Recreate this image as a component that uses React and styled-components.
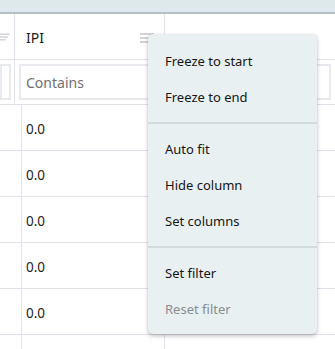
import React from 'react';
import styled, { createGlobalStyle } from 'styled-components';

const GlobalStyle = createGlobalStyle`
  html, body {
    margin: 0;
    padding: 0;
    background: #ffffff;
    overflow: hidden;
  }
  body {
    font-family: "Noto Sans", "Open Sans", sans-serif;
    color: #1c1c1c;
  }
`;

const Page = styled.div`
  position: relative;
  width: 335px;
  height: 349px;
  overflow: hidden;
`;

const TopBar = styled.div`
  height: 12px;
  background: #dde9ea;
  border-bottom: 2px solid #b3bdc2;
`;

const Row = styled.div`
  display: grid;
  grid-template-columns: 15px 150px 1fr;
  height: ${p => p.h}px;
  border-bottom: 1px solid #e1e1ea;
  box-sizing: border-box;
`;

const Cell = styled.div`
  display: flex;
  align-items: center;
  border-right: 1px solid #e1e1ea;
  padding: 2px 10px 0 11px;
  font-size: 13.5px;
  min-width: 0;
  position: relative;
  &:last-child {
    border-right: none;
  }
`;

const EdgeCell = styled(Cell)`
  padding: 0;
  justify-content: flex-end;
  padding-right: 4px;
`;

const HeaderText = styled.span`
  flex: 1;
  font-size: 14px;
  color: #1a1a1a;
`;

const FilterCell = styled.div`
  display: flex;
  align-items: center;
  border-right: 1px solid #e1e1ea;
  padding: 0 4px;
  &:last-child {
    border-right: none;
  }
`;

const FilterBox = styled.div`
  flex: 1;
  height: 36px;
  box-sizing: border-box;
  border: 2px solid #e9e9f0;
  display: flex;
  align-items: center;
  padding-left: 5px;
  font-size: 14px;
  color: #6f6f6f;
  margin-right: ${p => p.mr || 0}px;
`;

const Menu = styled.div`
  position: absolute;
  left: 148px;
  top: 34px;
  width: 169px;
  height: 300px;
  box-sizing: border-box;
  padding: 9px 0 7px;
  background: #e9f0f2;
  border-radius: 5px;
  box-shadow: 0 2px 4px rgba(0, 0, 0, 0.25), 0 0 1px rgba(0, 0, 0, 0.12);
  display: flex;
  flex-direction: column;
`;

const MenuItem = styled.div`
  height: 36px;
  display: flex;
  align-items: center;
  padding-left: 17px;
  font-size: 13px;
  color: ${p => (p.disabled ? '#8a8d8f' : '#161616')};
`;

const Separator = styled.div`
  height: 2px;
  margin: 7px 0;
  background: #d3dbde;
`;

function ColumnIcon() {
  return (
    <svg width="14" height="10" viewBox="0 0 14 10">
      <g stroke="#b4b4b8" strokeWidth="1.2">
        <line x1="0" y1="1" x2="14" y2="1" />
        <line x1="0" y1="5" x2="11" y2="5" />
        <line x1="0" y1="9" x2="8" y2="9" />
      </g>
    </svg>
  );
}

const rows = ['0.0', '0.0', '0.0', '0.0', '0.0', ''];

export default function App() {
  return (
    <Page>
      <GlobalStyle />
      <TopBar />
      <Row h={46}>
        <EdgeCell>
          <ColumnIcon />
        </EdgeCell>
        <Cell>
          <HeaderText>IPI</HeaderText>
          <ColumnIcon />
        </Cell>
        <Cell />
      </Row>
      <Row h={45}>
        <FilterCell style={{ padding: 0 }}>
          <FilterBox mr={3} />
        </FilterCell>
        <FilterCell>
          <FilterBox>Contains</FilterBox>
        </FilterCell>
        <FilterCell>
          <FilterBox />
        </FilterCell>
      </Row>
      {rows.map((v, i) => (
        <Row h={46} key={i}>
          <Cell />
          <Cell>{v}</Cell>
          <Cell />
        </Row>
      ))}
      <Menu>
        <MenuItem>Freeze to start</MenuItem>
        <MenuItem>Freeze to end</MenuItem>
        <Separator />
        <MenuItem>Auto fit</MenuItem>
        <MenuItem>Hide column</MenuItem>
        <MenuItem>Set columns</MenuItem>
        <Separator />
        <MenuItem>Set filter</MenuItem>
        <MenuItem disabled>Reset filter</MenuItem>
      </Menu>
    </Page>
  );
}
